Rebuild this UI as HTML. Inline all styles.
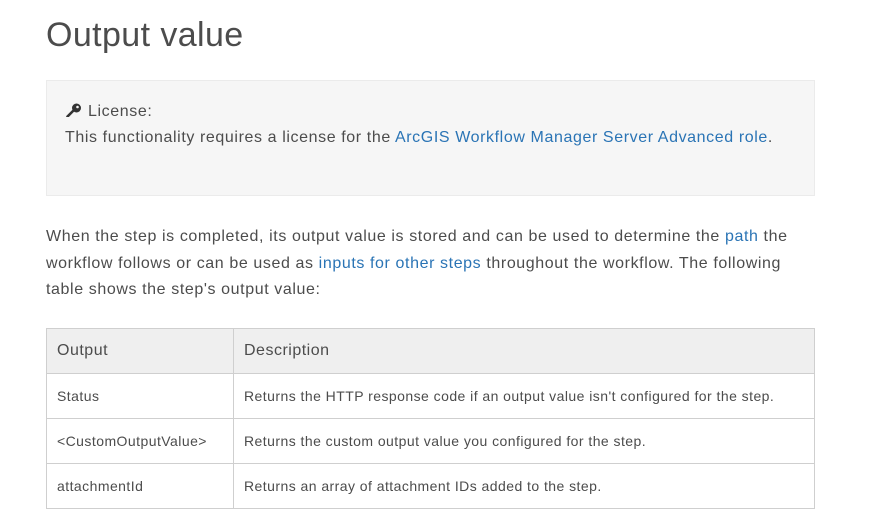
<!DOCTYPE html>
<html><head><style>
body{margin:0;background:#fff;font-family:"Liberation Sans",sans-serif;color:#4c4c4c;width:893px;height:519px;overflow:hidden;position:relative}
h1{position:absolute;left:46px;top:16px;margin:0;font-weight:300;font-size:34px;color:#4c4c4c;letter-spacing:0.4px}
.box{position:absolute;left:46px;top:80px;width:767px;height:114px;background:#f6f6f6;border:1px solid #ebebeb;letter-spacing:0.6px}
.lic{position:absolute;left:19px;top:22px;font-size:16px;color:#4c4c4c}
.txt{position:absolute;left:18px;top:48px;font-size:16px;white-space:nowrap}
a{color:#2a74b5;text-decoration:none}
p{position:absolute;left:46px;top:224px;margin:0;width:775px;font-size:16px;line-height:26.5px;letter-spacing:0.6px}
table{position:absolute;left:46px;top:328px;width:769px;border-collapse:collapse;font-size:14px;letter-spacing:0.45px}
td,th{border:1px solid #cfcfcf;text-align:left;padding:0 10px;height:44px}
th{background:#efefef;font-weight:normal;font-size:16px;height:44px;letter-spacing:0.5px}
</style></head><body>
<h1>Output value</h1>
<div class="box">
<div class="lic"><svg width="16" height="14" viewBox="0 0 16 14" style="vertical-align:-1px;margin-right:6px"><circle cx="10.5" cy="5" r="4.5" fill="#333"/><circle cx="11.5" cy="4" r="1.3" fill="#f6f6f6"/><path d="M7 8 L1.5 13.5" stroke="#333" stroke-width="2.6" stroke-linecap="round"/></svg>License:</div>
<div class="txt">This functionality requires a license for the <a>ArcGIS Workflow Manager Server Advanced role</a>.</div>
</div>
<p>When the step is completed, its output value is stored and can be used to determine the <a>path</a> the workflow follows or can be used as <a>inputs for other steps</a> throughout the workflow. The following table shows the step's output value:</p>
<table>
<tr><th style="width:166px">Output</th><th>Description</th></tr>
<tr><td>Status</td><td>Returns the HTTP response code if an output value isn't configured for the step.</td></tr>
<tr><td>&lt;CustomOutputValue&gt;</td><td>Returns the custom output value you configured for the step.</td></tr>
<tr><td>attachmentId</td><td>Returns an array of attachment IDs added to the step.</td></tr>
</table>
</body></html>
